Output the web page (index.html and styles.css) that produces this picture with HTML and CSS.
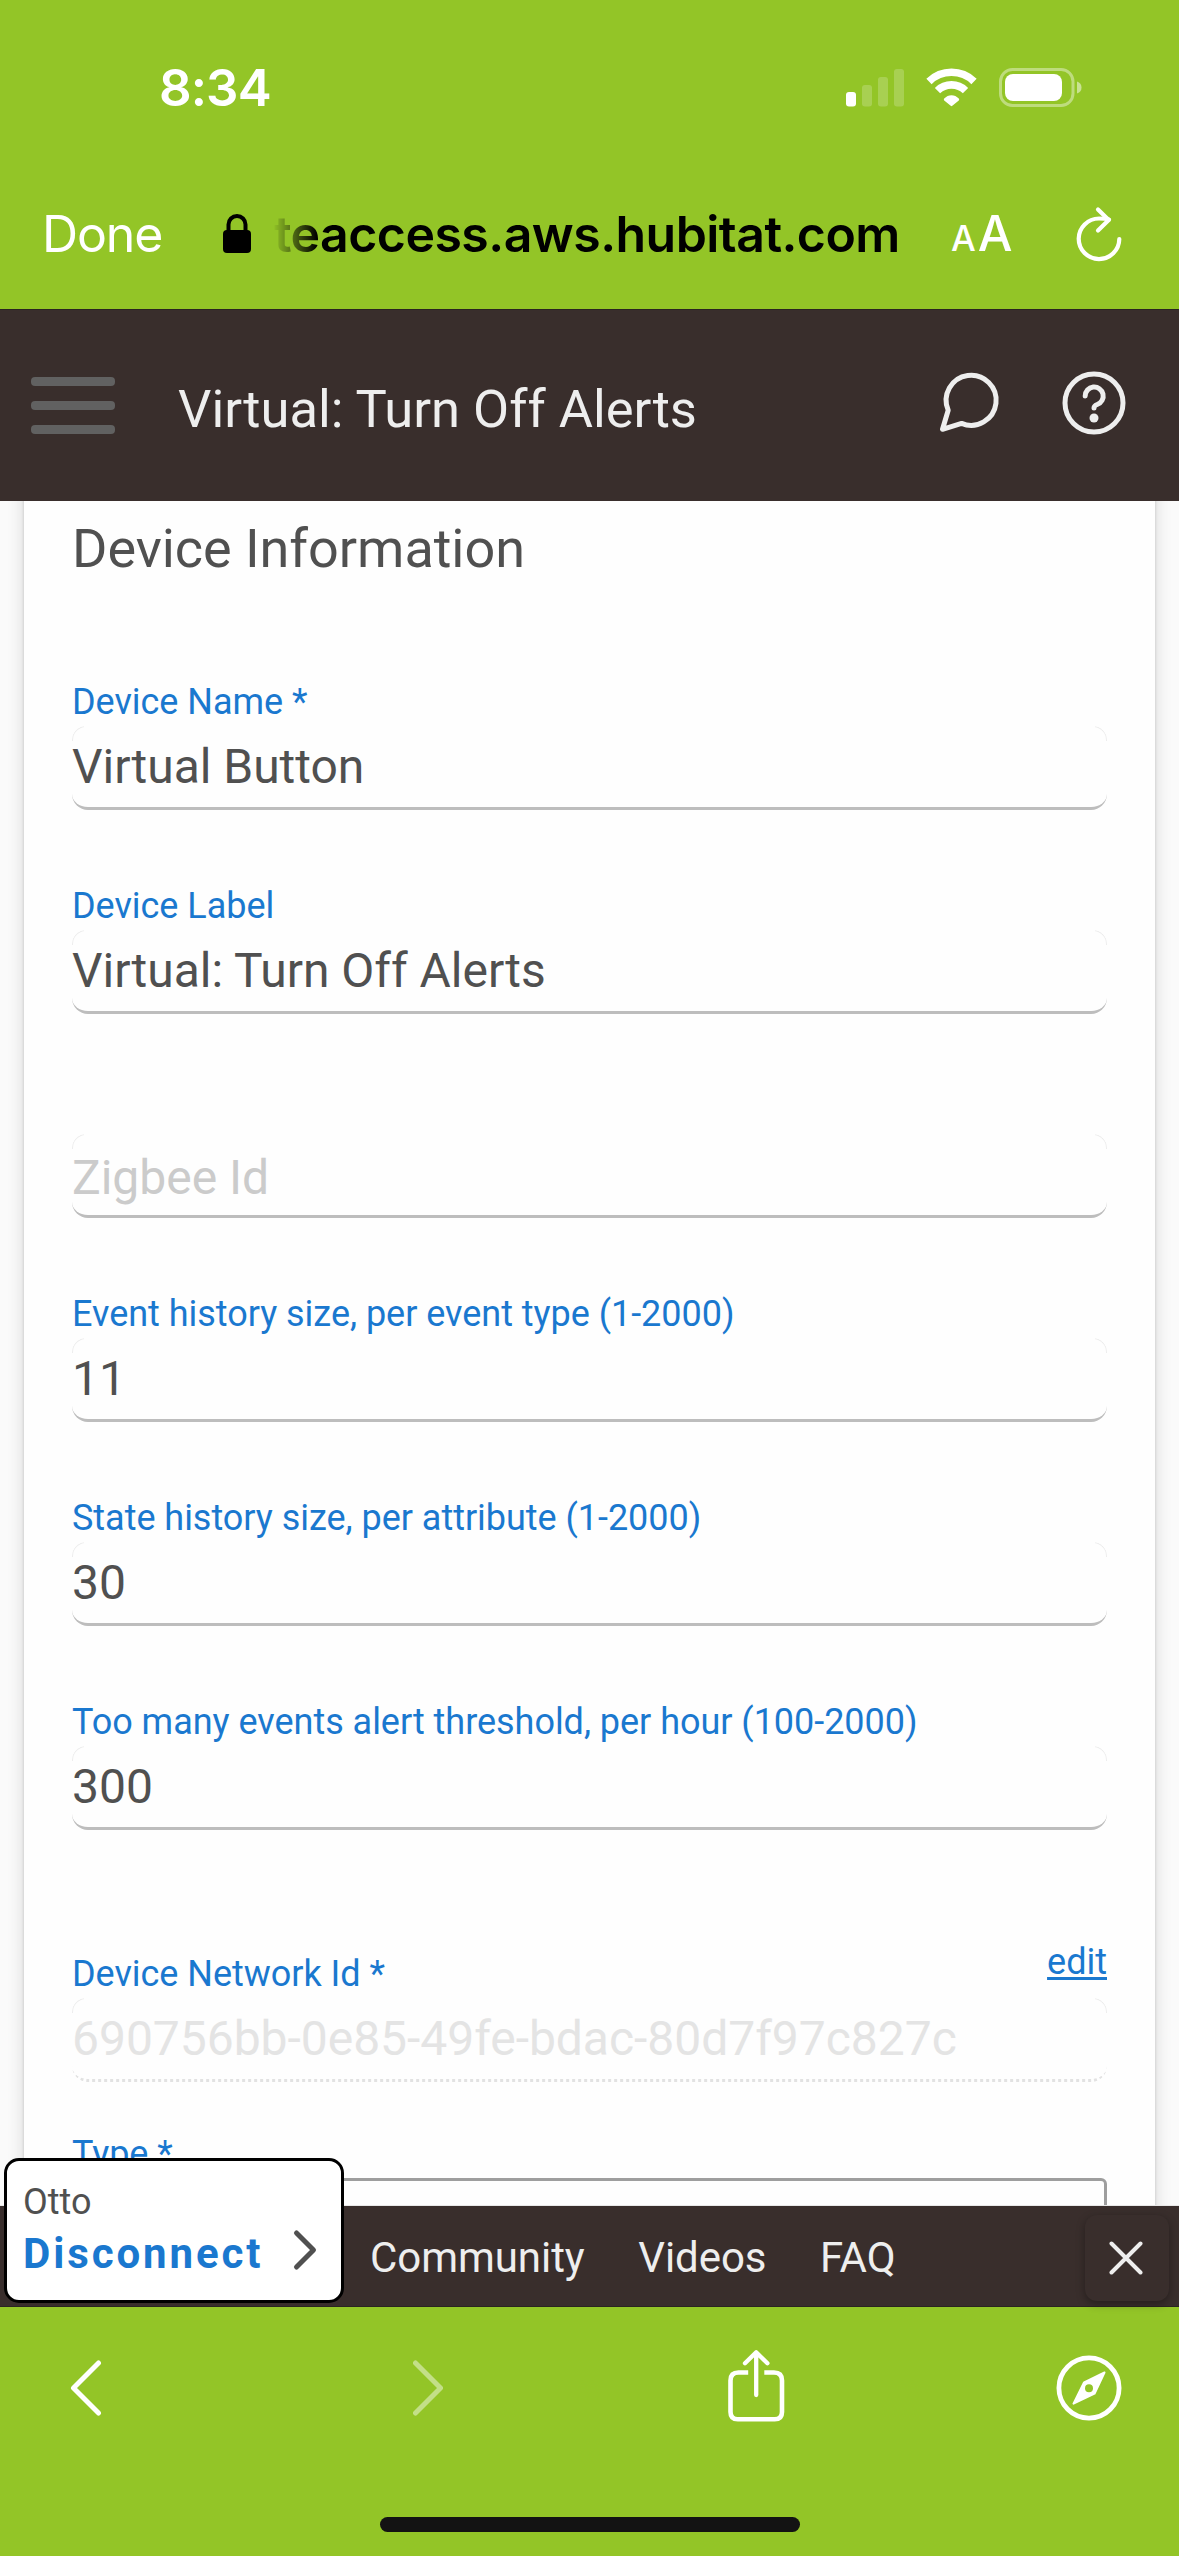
FILE: index.html
```html
<!DOCTYPE html>
<html lang="en">
<head>
<meta charset="utf-8">
<title>Virtual: Turn Off Alerts</title>
<link rel="stylesheet" href="styles.css">
</head>
<body>
<div class="screen">
  <div class="status">
    <span class="clock">8:34</span>
    <svg class="status-icons" width="236" height="40" viewBox="846 68 236 40" fill="#fff">
      <rect x="846" y="92" width="10" height="14.4" rx="3"/>
      <g opacity=".2">
        <rect x="862" y="85" width="10" height="21.4" rx="3"/>
        <rect x="878" y="77" width="10" height="29.4" rx="3"/>
        <rect x="894" y="69" width="10" height="37.4" rx="3"/>
      </g>
      <g fill="none" stroke="#fff" stroke-width="7.6">
        <path d="M929 81.4a32.4 32.4 0 0 1 45 0"/>
        <path d="M937.5 90.6a20 20 0 0 1 28 0"/>
      </g>
      <path d="M944.2 98.6c4-4.6 10.600-4.600 14.600 0q.8.900 0 1.800l-6.500 5.400q-.8.700-1.600 0l-6.500-5.400q-.800-.900 0-1.800z"/>
      <rect x="1000.500" y="69.500" width="72.500" height="36" rx="12" fill="none" stroke="#fff" stroke-width="3" opacity=".4"/>
      <rect x="1005" y="74" width="57" height="27" rx="8"/>
      <path d="M1077 81.500q4.500 1.500 4.500 6t-4.500 6z" opacity=".5"/>
    </svg>
  </div>

  <div class="address">
    <span class="done">Done</span>
    <svg class="lock" width="28" height="40" viewBox="0 0 28 40">
      <rect x="0" y="16" width="28" height="23" rx="4"/>
      <path d="M5.500 18v-7.500a8.500 8.500 0 0 1 17 0V18" fill="none" stroke="#000" stroke-width="4"/>
    </svg>
    <span class="url">teaccess.aws.hubitat.com</span>
    <span class="reader"><small>A</small>A</span>
    <svg class="reload" width="48" height="58" viewBox="1075 206 48 58" fill="none" stroke="#fff" stroke-width="4.200" stroke-linecap="round" stroke-linejoin="round">
      <path d="M1109 219.500q-4-1-10-1a20.300 20.300 0 1 0 20.300 20.500"/>
      <path d="M1098 209.500l10.700 10.500L1098 230.500"/>
    </svg>
  </div>

  <header class="appbar">
    <div class="menu"><i></i><i></i><i></i></div>
    <h1 class="title">Virtual: Turn Off Alerts</h1>
    <svg class="chat" width="64" height="64" viewBox="938 370 64 64" fill="none" stroke="#eee" stroke-width="5" stroke-linecap="round" stroke-linejoin="round">
      <path d="M948.200 410.200A25 25 0 1 1 961.600 423.400L942.500 429.300z"/>
    </svg>
    <svg class="help" width="64" height="64" viewBox="1062.500 371.500 64 64" fill="none" stroke="#eee" stroke-width="5" stroke-linecap="round" stroke-linejoin="round">
      <circle cx="1094.500" cy="403.500" r="29"/>
      <path d="M1085.700 396.500a9 9 0 1 1 12 8.500q-3.200 1.200-3.200 3.500"/>
      <circle cx="1094.500" cy="418.500" r="4.500" fill="#eee" stroke="none"/>
    </svg>
  </header>

  <main class="page">
    <section class="card">
      <h2 class="heading">Device Information</h2>
      <div class="fields">
        <div class="field"><label class="label">Device Name *</label><div class="input">Virtual Button</div></div>
        <div class="field"><label class="label">Device Label</label><div class="input">Virtual: Turn Off Alerts</div></div>
        <div class="field"><label class="label"></label><div class="input empty">Zigbee Id</div></div>
        <div class="field"><label class="label">Event history size, per event type (1-2000)</label><div class="input">11</div></div>
        <div class="field"><label class="label">State history size, per attribute (1-2000)</label><div class="input">30</div></div>
        <div class="field"><label class="label">Too many events alert threshold, per hour (100-2000)</label><div class="input">300</div></div>
      </div>
      <div class="network">
        <div class="network-head"><label class="label">Device Network Id *</label><a class="edit">edit</a></div>
        <div class="input disabled">690756bb-0e85-49fe-bdac-80d7f97c827c</div>
      </div>
      <div class="type"><label class="label">Type *</label><div class="select"></div></div>
    </section>
  </main>

  <footer class="footer">
    <div class="connect">
      <div class="connect-text"><span class="hub">Otto</span><b class="disconnect">Disconnect</b></div>
      <svg class="chevron" width="26" height="42" viewBox="0 0 26 42" fill="none" stroke="#505050" stroke-width="5" stroke-linecap="round" stroke-linejoin="round"><path d="M4.500 4l17 17-17 17"/></svg>
    </div>
    <nav class="links"><a>Community</a><a>Videos</a><a>FAQ</a></nav>
    <div class="close">
      <svg width="34" height="34" viewBox="0 0 34 34" stroke="#eee" stroke-width="4" stroke-linecap="round"><path d="M2.500 2.500l29 29M31.500 2.500l-29 29"/></svg>
    </div>
  </footer>

  <div class="toolbar">
    <svg width="32" height="56" viewBox="0 0 32 56" fill="none" stroke="#fff" stroke-width="5" stroke-linecap="round" stroke-linejoin="round"><path d="M28.500 3L3.500 28l25 25"/></svg>
    <svg class="forward" width="32" height="56" viewBox="0 0 32 56" fill="none" stroke="#fff" stroke-width="5" stroke-linecap="round" stroke-linejoin="round"><path d="M3.500 3l25 25-25 25"/></svg>
    <svg class="share" width="58" height="74" viewBox="727 2349 58 74" fill="none" stroke="#fff" stroke-width="4.600">
      <path d="M748.200 2372.500h-9.700q-8 0-8 8v31.500q0 7.300 7.300 7.300h36.900q7.300 0 7.300-7.300v-31.500q0-8-8-8h-9.700"/>
      <path d="M756.200 2353v42M745 2363.300l11.200-11 11.200 11" stroke-width="4.300" stroke-linecap="round" stroke-linejoin="round"/>
    </svg>
    <svg class="compass" width="66" height="66" viewBox="1056.500 2355.300 66 66">
      <circle cx="1089.500" cy="2388.300" r="30.100" fill="none" stroke="#fff" stroke-width="4.800"/>
      <path fill="#fff" stroke="#fff" stroke-width="2" stroke-linejoin="round" d="M1105 2372.800L1084.600 2382.600 1074 2404 1095 2394z"/>
      <circle cx="1089.500" cy="2388.600" r="4" fill="#93c527"/>
    </svg>
  </div>
  <div class="home"></div>
</div>
</body>
</html>
```
FILE: styles.css
```css
* { box-sizing: border-box; margin: 0; padding: 0; }
body { background: #93c527; font-family: Roboto, "Liberation Sans", sans-serif; color: #505050; }
svg { display: block; flex: none; }
.screen { width: 1179px; height: 2556px; display: flex; flex-direction: column; overflow: hidden; }

.status, .address { font-family: Inter, "Liberation Sans", sans-serif; color: #fff; display: flex; }
.status { height: 176px; padding: 68px 97px 0 159px; justify-content: space-between; align-items: flex-start; }
.clock { font-size: 51px; font-weight: 600; line-height: 40px; letter-spacing: -.9px; }
.address { height: 133px; padding: 0 56px 0 42px; align-items: flex-start; line-height: 60px; white-space: nowrap; }
.done { width: 181px; margin-top: 28px; font-size: 50px; letter-spacing: -1.1px; }
.lock { margin-top: 38px; }
.url { width: 630px; margin: 28px 0 0 22px; font-size: 50px; font-weight: 600; letter-spacing: -.55px; color: #000; padding-left: 1px; -webkit-mask-image: linear-gradient(90deg, transparent 0, #000 44px); mask-image: linear-gradient(90deg, transparent 0, #000 44px); }
.reader { width: 60px; margin: 28px 0 0 48px; font-size: 49px; font-weight: 500; display: flex; gap: 2px; align-items: baseline; }
.reader small { font-size: 35px; }
.reload { margin: 30px 0 0 64px; }

.appbar { height: 192px; background: #392e2c; border-top: 1px solid #2a2520; padding: 0 53px 0 31px; display: flex; align-items: flex-start; }
.menu { width: 84px; margin-top: 67px; display: grid; gap: 15.500px; }
.menu i { height: 8.500px; border-radius: 4px; background: #616161; }
.title { flex: 1; margin: 69px 0 0 63px; font-size: 52.500px; line-height: 60px; font-weight: 400; color: #eee; white-space: nowrap; }
.chat { margin-top: 60px; }
.help { margin: 61px 0 0 60px; }

.page { height: 1705px; background: #fafafa; padding: 0 24px; overflow: hidden; border-bottom: 1px solid #e8e8e8; }
.card { background: #fefefe; height: 1800px; margin-top: -20px; padding: 35px 48px 0; box-shadow: 0 0 3px rgba(0,0,0,.16), 0 0 16px rgba(0,0,0,.14); }
.heading { font-size: 54px; line-height: 66px; font-weight: 400; margin-bottom: 96px; letter-spacing: -.05px; }
.fields { display: grid; gap: 72px; }
.label { display: block; height: 48px; font-size: 36px; line-height: 48px; letter-spacing: -.03px; color: #1a78cf; white-space: nowrap; }
.input { position: relative; height: 84px; font-size: 48px; line-height: 81px; letter-spacing: -.03px; border-bottom: 3px solid #bdbdbd; border-radius: 16px; }
.input::before { content: ""; position: absolute; inset: 0 0 auto; height: 14px; border: 1px solid #ededed; border-bottom: 0; border-radius: 14px 14px 0 0; -webkit-mask-image: linear-gradient(90deg, #000 12px, transparent 12px calc(100% - 12px), #000 0); mask-image: linear-gradient(90deg, #000 12px, transparent 12px calc(100% - 12px), #000 0); }
.empty { color: #cbcbcb; line-height: 87px; }
.network { margin-top: 108px; }
.network-head { display: flex; height: 60px; justify-content: space-between; align-items: flex-end; }
.edit { height: 60px; font-size: 36px; line-height: 48px; color: #1a78cf; text-decoration: underline; text-decoration-thickness: 3px; text-underline-offset: 3px; text-decoration-skip-ink: none; }
.disabled { color: #e4e4e4; border-bottom: 3px dotted #e2e2e2; }
.type { margin-top: 48px; }
.select { height: 96px; border: 3px solid #9e9e9e; border-radius: 6px; }

.footer { position: relative; height: 101px; background: #392e2c; border-bottom: 1px solid #2a2520; display: flex; justify-content: space-between; padding: 9px 10px 0 370px; }
.connect { position: absolute; left: 4px; top: -48px; width: 340px; height: 145px; background: #fff; border: 3px solid #000; border-radius: 15px; display: flex; justify-content: space-between; padding: 17px 23px 0 16px; }
.connect-text { display: flex; flex-direction: column; }
.hub { font-size: 36px; line-height: 48px; }
.disconnect { font-size: 42px; line-height: 56px; font-weight: 700; letter-spacing: 2.900px; color: #1a78cf; }
.chevron { margin-top: 51px; }
.links { display: flex; gap: 53.500px; font-size: 42px; line-height: 86px; letter-spacing: -.05px; color: #eee; }
.close { width: 84px; height: 86px; border-radius: 12px; display: grid; place-items: center; padding-right: 2px; background: #392e2c; box-shadow: 0 3px 8px rgba(0,0,0,.35); }

.toolbar { height: 210px; display: flex; align-items: flex-start; padding: 53px 56px 0 70px; }
.forward { margin-left: 310px; opacity: .45; }
.share { margin: -11px 0 0 283px; }
.compass { margin: -5px 0 0 271px; }
.home { width: 420px; height: 15px; border-radius: 8px; background: #131313; margin: 0 auto; }
```
